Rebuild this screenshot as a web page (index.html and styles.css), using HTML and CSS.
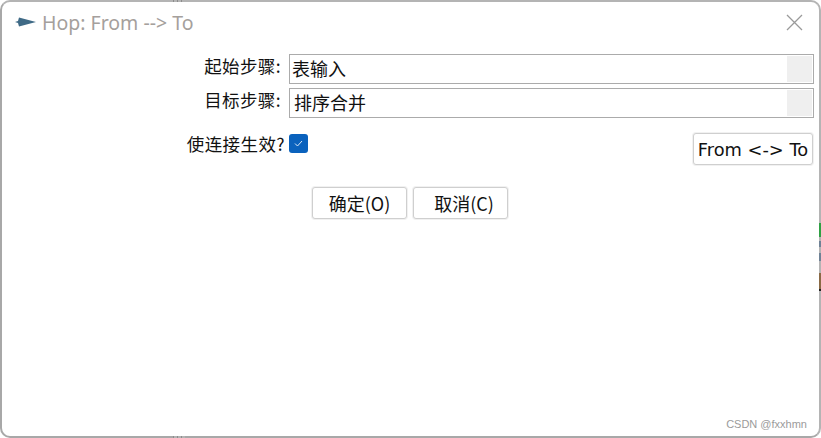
FILE: index.html
```html
<!DOCTYPE html>
<html lang="zh">
<head>
<meta charset="utf-8">
<title>Hop: From --> To</title>
<link rel="stylesheet" href="styles.css">
</head>
<body>
<div class="window">
  <header class="titlebar">
    <svg class="hop-icon" width="21" height="12" viewBox="0 0 21 12"><path d="M0 6 L3 5 L4 1.5 L21 6 L4 10.5 L3 7 Z" fill="#3f6a86"/></svg>
    <span class="title">Hop: From --&gt; To</span>
    <svg class="close" width="17" height="17" viewBox="0 0 17 17"><path d="M1 1 L16 16 M16 1 L1 16" stroke="#9a9a9a" stroke-width="1.3" fill="none"/></svg>
  </header>
  <main class="form">
    <label class="label">起始步骤:</label>
    <div class="field"><span class="value">表输入</span><span class="drop"></span></div>
    <label class="label">目标步骤:</label>
    <div class="field"><span class="value second">排序合并</span><span class="drop"></span></div>
    <label class="label enable">使连接生效?</label>
    <div class="enable-row">
      <span class="check"><svg width="9" height="7" viewBox="0 0 9 7"><path d="M1 3.5 L3.5 6 L8 1" stroke="#dbe9f7" stroke-width="1" fill="none"/></svg></span>
      <button class="btn swap">From &lt;-&gt; To</button>
    </div>
  </main>
  <footer class="actions">
    <button class="btn action">确定(O)</button>
    <button class="btn action cancel">&nbsp;取消(C)</button>
  </footer>
  <span class="watermark">CSDN @fxxhmn</span>
  <span class="edge-marks"></span>
  <span class="tick tick-top"></span>
  <span class="tick tick-bottom"></span>
</div>
</body>
</html>
```
FILE: styles.css
```css
* { box-sizing: border-box; }
html, body { margin: 0; padding: 0; background: #fff; }
body { width: 821px; height: 438px; overflow: hidden; font-family: "Noto Sans CJK SC", "Noto Sans", sans-serif; }
.window {
  position: relative;
  width: 821px; height: 438px;
  background: #fff;
  border: 2px solid #b4b4b4;
  border-left-color: #a8a8a8;
  border-bottom-color: #a8a8a8;
  border-radius: 10px;
  display: flex; flex-direction: column;
}
.titlebar { height: 40px; display: flex; align-items: center; padding: 0 16px 0 13px; }
.hop-icon { margin-right: 6px; }
.title { flex: 1; font-family: "Noto Sans", sans-serif; font-size: 19.5px; color: #a5a09c; }
.form {
  display: grid;
  grid-template-columns: 287px 525px;
  grid-template-rows: 30px 30px auto;
  row-gap: 4px;
  margin-top: 12px;
  align-items: center;
}
.label { font-size: 17.5px; letter-spacing: 0.4px; color: #111; text-align: right; padding-right: 8px; line-height: 24px; white-space: nowrap; position: relative; top: -3px; }
.field {
  height: 30px; display: flex; align-items: center; justify-content: space-between;
  border: 1px solid #ababab; padding: 1px;
}
.value { font-size: 18px; color: #111; padding-left: 1px; line-height: 24px; position: relative; top: -1px; }
.value.second { padding-left: 3px; }
.drop { width: 25px; height: 26px; background: #efefef; }
.enable { align-self: start; margin-top: 10px; padding-right: 4px; top: 0; }
.enable-row { display: flex; justify-content: space-between; align-items: flex-start; height: 47px; }
.check {
  margin-top: 12px; width: 19px; height: 19px; border-radius: 3px; background: #0a62bd;
  display: flex; align-items: center; justify-content: center;
}
.btn {
  background: #fff; border: 1px solid #cfcfcf; border-radius: 3px; color: #111; padding: 0;
  box-shadow: 0 0 0 1px #f1f1f1;
}
.swap { margin: 11px 1px 0 0; width: 120px; height: 32px; font-family: "DejaVu Sans", sans-serif; font-size: 17.8px; }
.actions { display: flex; gap: 6px; margin: 18px 0 0 310px; }
.action { width: 95px; height: 32px; font-family: "Noto Sans CJK SC", sans-serif; font-size: 18px; }
.cancel { padding-left: 3px; }
.watermark { position: absolute; right: 12px; bottom: 6px; font-family: "Liberation Sans", sans-serif; font-size: 11px; color: #9b9b9b; }
.edge-marks {
  position: absolute; right: -2px; top: 221px; width: 2px; height: 68px;
  background: linear-gradient(#2fa043 0 14px, #b4b4b4 14px 18px, #6f8296 18px 24px, #b4b4b4 24px 30px, #6f8296 30px 38px, #b4b4b4 38px 50px, #8a6a45 50px 66px, #222 66px 68px);
}
.tick {
  position: absolute; left: 171px; width: 12px; height: 2px;
  background: repeating-linear-gradient(90deg, #8c8c8c 0 1px, #b4b4b4 1px 4px);
}
.tick-top { top: -2px; }
.tick-bottom { bottom: -2px; }
```
